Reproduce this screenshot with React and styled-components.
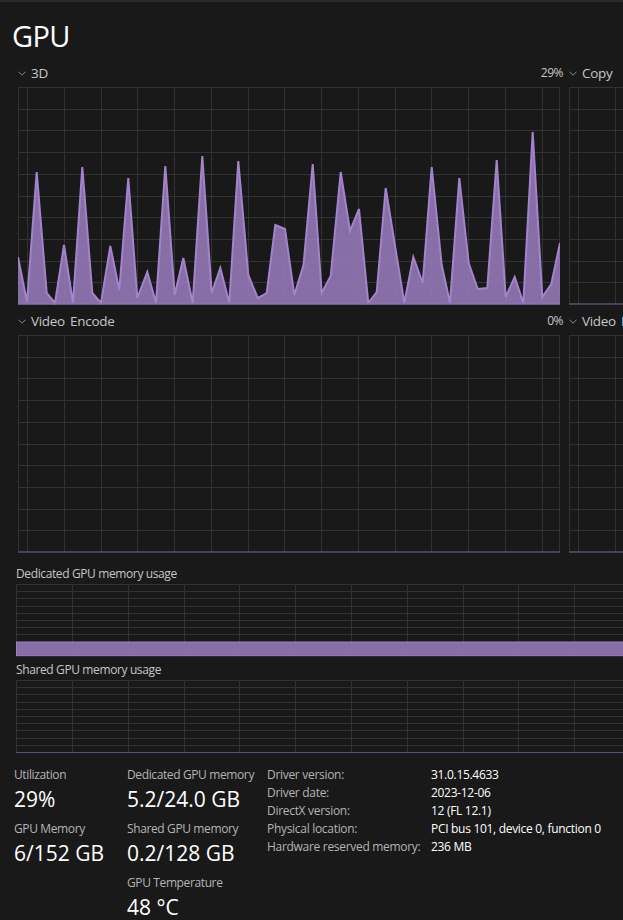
import React from "react";
import styled, { createGlobalStyle } from "styled-components";

const Global = createGlobalStyle`
  html, body { margin: 0; padding: 0; background: #191919; }
  body { font-family: "Open Sans", "Noto Sans", "Liberation Sans", sans-serif; }
`;

const Page = styled.div`
  width: 623px;
  height: 920px;
  overflow: hidden;
  background: #191919;
  box-sizing: border-box;
  border-top: 2px solid #2a2a2a;
  color: #fff;
`;
const Title = styled.h1`
  margin: 0;
  padding: 15px 0 0 12px;
  height: 49px;
  box-sizing: border-box;
  font-size: 29px;
  line-height: 38px;
  font-weight: 400;
  letter-spacing: -0.6px;
`;
const ChartGrid = styled.div`
  display: grid;
  grid-template-columns: 542px 300px;
  column-gap: 9px;
  row-gap: 0;
  padding-left: 18px;
  width: 900px;
`;
const ChartCell = styled.section`
  height: 248px;
  display: flex;
  flex-direction: column;
  &:nth-child(n + 3) { height: 250px; }
`;
const ChartHeader = styled.header`
  height: 36px;
  flex: none;
  display: flex;
  align-items: flex-end;
  justify-content: space-between;
  padding-bottom: 5px;
  box-sizing: border-box;
  font-size: 13.5px;
  line-height: 18px;
  color: #c6c6c6;
  letter-spacing: -0.3px;
  word-spacing: 2px;
`;
const HeaderLabel = styled.span`
  display: flex;
  align-items: center;
  gap: 5px;
`;
const Percent = styled.span`
  font-size: 12px;
  letter-spacing: -0.5px;
  margin-right: -3px;
`;
const Plot = styled.svg`
  display: block;
  flex: none;
`;
const MemorySection = styled.section`
  padding: 15px 0 0 16px;
  width: 607px;
  overflow: hidden;
`;
const MemoryLabel = styled.div`
  height: 20px;
  font-size: 12px;
  line-height: 20px;
  color: #c6c6c6;
  letter-spacing: -0.38px;
  svg + & { margin-top: 3px; }
`;
const Stats = styled.div`
  display: flex;
  padding: 13px 0 0 14px;
`;
const StatColumn = styled.div`
  width: ${(p) => p.$w}px;
  flex: none;
  display: flex;
  flex-direction: column;
`;
const Stat = styled.div`
  height: 54px;
`;
const StatLabel = styled.div`
  font-size: 12px;
  line-height: 18px;
  color: #b4b4b4;
  letter-spacing: -0.38px;
`;
const StatValue = styled.div`
  font-size: 21px;
  line-height: 28px;
  margin-top: 1px;
  color: #fff;
`;
const Details = styled.dl`
  margin: 0;
  display: grid;
  grid-template-columns: 164px auto;
  grid-auto-rows: 18px;
  font-size: 12px;
  line-height: 18px;
  letter-spacing: -0.3px;
`;
const DetailKey = styled.dt`
  color: #b4b4b4;
`;
const DetailValue = styled.dd`
  margin: 0;
  color: #fff;
`;

const Chevron = () => (
  <svg width="8" height="5" viewBox="0 0 8 5" fill="none">
    <path d="M0.5 0.7 L4 4.2 L7.5 0.7" stroke="#8a8a8a" strokeWidth="1" />
  </svg>
);

const points3D = [
  [0,170],[9,215],[18.7,85],[28.7,206],[37,216],[46,158],[55,216],[64.3,80],[74.3,206],[83,216],
  [92.3,159],[101.3,203],[110.3,91],[119.3,211],[129.3,185],[138,216],[147.3,79],[156.7,208],
  [165.3,171],[174.7,216],[184.3,69],[193.7,206],[202.3,181],[211.3,216],[220.3,74],[230.3,188],
  [239.7,211],[248.7,206],[257.3,138],[267,142],[276.3,208],[285.5,178],[294.7,77],[303.7,206],
  [312.7,189],[322.7,85],[332,144],[341,122],[350.3,216],[358.7,205],[367.7,101],[386.3,216],
  [395.3,170],[404.7,196],[413.7,80],[423.7,178],[432,216],[441.3,91],[450.7,176],[459.7,202],
  [469.3,201],[478.7,73],[487.7,210],[496.7,190],[505.3,216],[514.7,45],[524.3,210],[533.3,197],[542,156],
];

const GridLines = ({ w, h, rows, cols, offset = 0, step, color = "#323232" }) => {
  const lines = [];
  for (let i = 0; i < rows; i++) {
    const y = Math.round((i * h) / rows) + 0.5;
    lines.push(<line key={`h${i}`} x1="0" x2={w} y1={y} y2={y} stroke={color} />);
  }
  lines.push(<line key="l" x1="0.5" x2="0.5" y1="0" y2={h} stroke={color} />);
  for (let i = 0; i < cols; i++) {
    const x = Math.round(offset + i * step) + 0.5;
    lines.push(<line key={`v${i}`} x1={x} x2={x} y1="0" y2={h} stroke={color} />);
  }
  return lines;
};

const Graph = ({ w, points, rightEdge }) => (
  <Plot width={w} height="218" viewBox={`0 0 ${w} 218`}>
    <GridLines w={w} h={217} rows={10} cols={16} offset={9} step={36.75} />
    {rightEdge && <line x1={w - 0.5} x2={w - 0.5} y1="0" y2="217" stroke="#323232" />}
    {points && (
      <polygon
        points={`0,217 ${points.map((p) => p.join(",")).join(" ")} ${w},217`}
        fill="rgba(150,122,185,0.88)"
      />
    )}
    {points && (
      <polyline
        points={points.map((p) => p.join(",")).join(" ")}
        fill="none"
        stroke="#a283cc"
        strokeWidth="2"
      />
    )}
    <line x1="0" x2={w} y1="217" y2="217" stroke={points ? "#8c78a6" : "#5b5070"} strokeWidth="1.5" />
  </Plot>
);

const MemoryGraph = ({ filled }) => (
  <Plot width="607" height="73" viewBox="0 0 607 73">
    <GridLines w={607} h={72} rows={10} cols={11} offset={56} step={55.8} />
    {filled ? (
      <rect x="0.5" y="58" width="607" height="14" fill="rgba(150,122,185,0.88)" stroke="#9e80c6" />
    ) : null}
    <line x1="0" x2="607" y1="72.5" y2="72.5" stroke={filled ? "#2f2a38" : "#5b5070"} />
  </Plot>
);

const details = [
  ["Driver version:", "31.0.15.4633"],
  ["Driver date:", "2023-12-06"],
  ["DirectX version:", "12 (FL 12.1)"],
  ["Physical location:", "PCI bus 101, device 0, function 0"],
  ["Hardware reserved memory:", "236 MB"],
];

export default function App() {
  return (
    <Page>
      <Global />
      <Title>GPU</Title>
      <ChartGrid>
        <ChartCell>
          <ChartHeader>
            <HeaderLabel><Chevron />3D</HeaderLabel>
            <Percent>29%</Percent>
          </ChartHeader>
          <Graph w={542} points={points3D} rightEdge />
        </ChartCell>
        <ChartCell>
          <ChartHeader>
            <HeaderLabel><Chevron />Copy</HeaderLabel>
          </ChartHeader>
          <Graph w={300} />
        </ChartCell>
        <ChartCell>
          <ChartHeader>
            <HeaderLabel><Chevron />Video Encode</HeaderLabel>
            <Percent>0%</Percent>
          </ChartHeader>
          <Graph w={542} rightEdge />
        </ChartCell>
        <ChartCell>
          <ChartHeader>
            <HeaderLabel><Chevron />Video Decode</HeaderLabel>
          </ChartHeader>
          <Graph w={300} />
        </ChartCell>
      </ChartGrid>
      <MemorySection>
        <MemoryLabel>Dedicated GPU memory usage</MemoryLabel>
        <MemoryGraph filled />
        <MemoryLabel>Shared GPU memory usage</MemoryLabel>
        <MemoryGraph />
      </MemorySection>
      <Stats>
        <StatColumn $w={113}>
          <Stat><StatLabel>Utilization</StatLabel><StatValue>29%</StatValue></Stat>
          <Stat><StatLabel>GPU Memory</StatLabel><StatValue>6/152 GB</StatValue></Stat>
        </StatColumn>
        <StatColumn $w={140}>
          <Stat><StatLabel>Dedicated GPU memory</StatLabel><StatValue>5.2/24.0 GB</StatValue></Stat>
          <Stat><StatLabel>Shared GPU memory</StatLabel><StatValue>0.2/128 GB</StatValue></Stat>
          <Stat><StatLabel>GPU Temperature</StatLabel><StatValue>48 °C</StatValue></Stat>
        </StatColumn>
        <Details>
          {details.map(([k, v]) => (
            <React.Fragment key={k}>
              <DetailKey>{k}</DetailKey>
              <DetailValue>{v}</DetailValue>
            </React.Fragment>
          ))}
        </Details>
      </Stats>
    </Page>
  );
}
